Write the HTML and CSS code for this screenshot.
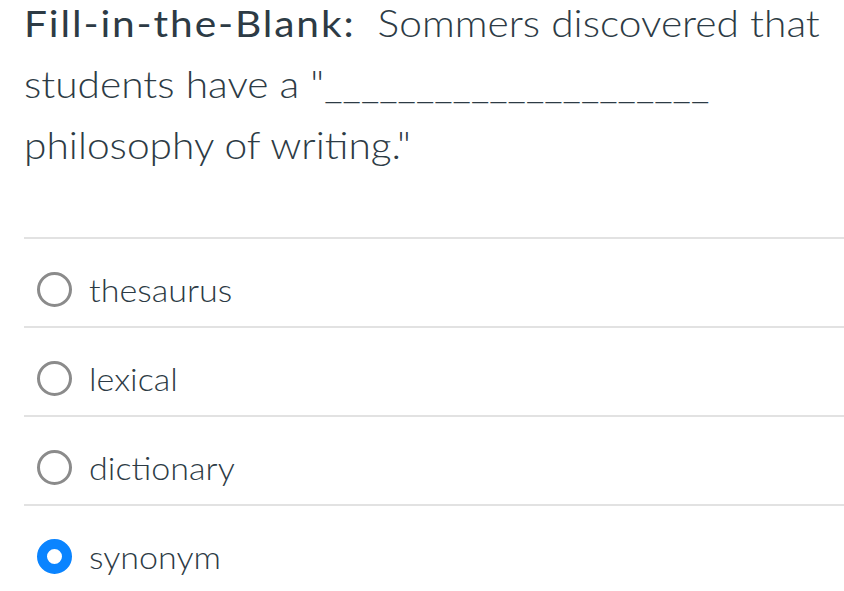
FILE: index.html
```html
<!DOCTYPE html>
<html>
<head>
<meta charset="utf-8">
<link rel="stylesheet" href="styles.css">
</head>
<body>
<div class="quiz">
  <p class="question"><span class="label">Fill-in-the-Blank:</span>&nbsp; Sommers discovered that students have a "_____________________ philosophy of writing."</p>
  <ul class="answers">
    <li class="answer"><span class="radio"></span><span class="text">thesaurus</span></li>
    <li class="answer"><span class="radio"></span><span class="text">lexical</span></li>
    <li class="answer"><span class="radio"></span><span class="text">dictionary</span></li>
    <li class="answer"><span class="radio checked"></span><span class="text">synonym</span></li>
  </ul>
</div>
</body>
</html>
```
FILE: styles.css
```css
html, body {
  margin: 0;
  padding: 0;
  background: #ffffff;
}
.quiz {
  padding-left: 24px;
  font-family: Lato, "Open Sans", sans-serif;
  color: #2d3b45;
}
.question {
  margin: -8px 0 0 0;
  width: 745px;
  font-size: 37px;
  font-weight: 300;
  line-height: 61px;
  transform: scaleX(1.1);
  transform-origin: 0 0;
}
.label {
  font-weight: 400;
  letter-spacing: 1.7px;
}
.answers {
  list-style: none;
  margin: 62px 0 0 0;
  padding: 0;
}
.answer {
  display: flex;
  align-items: center;
  gap: 17px;
  box-sizing: border-box;
  height: 89px;
  padding-top: 14px;
  border-top: 2px solid #e2e2e2;
  font-size: 31px;
  font-weight: 300;
}
.text {
  transform: scaleX(1.1);
  transform-origin: 0 50%;
}
.radio {
  box-sizing: border-box;
  width: 35px;
  height: 35px;
  margin-left: 13px;
  border-radius: 50%;
  border: 3.5px solid #8b8b8b;
  flex: none;
}
.radio.checked {
  border: 10px solid #0a84ff;
}
```
